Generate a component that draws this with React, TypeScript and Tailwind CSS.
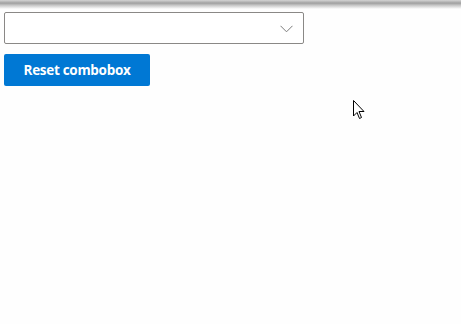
export default function App() {
    return (
        <div className="relative w-[461px] h-[324px] bg-[#fefefe] font-['Open_Sans',sans-serif] overflow-hidden">
            <div className="h-[9px] bg-[linear-gradient(to_bottom,#d4d4d4_0%,#a0a0a0_35%,#c8c8c8_60%,#fefefe_100%)]" />
            <div className="flex flex-col items-start gap-[10px] px-[4px] pt-[3px]">
                <div className="flex items-center justify-end w-[300px] h-[32px] border border-[#8a8886] rounded-[2px] bg-white pr-[10px]">
                    <svg width="13" height="8" viewBox="0 0 13 8" className="mt-[1px]">
                        <path d="M0.5 0.8 L6.5 6.8 L12.5 0.8" fill="none" stroke="#7a7a7a" strokeWidth="1" />
                    </svg>
                </div>
                <button className="h-[32px] w-[146px] rounded-[2px] bg-[#0078d4] text-white text-[13.5px] font-bold tracking-[-0.3px]">
                    Reset combobox
                </button>
            </div>
            <svg className="absolute left-[353px] top-[100px]" width="12" height="20" viewBox="0 0 12 20">
                <path d="M0.5 0.5 L0.5 16 L4 12.5 L6.5 18.5 L8.5 17.5 L6 11.5 L11 11.5 Z" fill="white" stroke="black" strokeWidth="1" />
            </svg>
        </div>
    );
}
